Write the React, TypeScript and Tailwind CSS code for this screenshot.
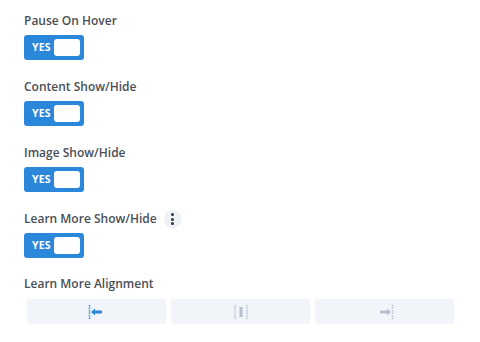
const font = { fontFamily: '"Open Sans", "Liberation Sans", sans-serif' };

function Toggle() {
  return (
    <div className="flex items-center justify-between w-[60px] h-[25px] rounded-[3px] bg-[#2b87da] pl-[8px] pr-[4px]">
      <span className="text-[10.5px] font-bold text-white tracking-[0.2px]">YES</span>
      <span className="w-[26px] h-[17px] rounded-[3px] bg-white" />
    </div>
  );
}

function Label({ children }: { children: React.ReactNode }) {
  return <div className="h-[18px] leading-[18px] text-[12px] font-semibold text-[#4a4f57]">{children}</div>;
}

function AlignLeft({ color }: { color: string }) {
  return (
    <svg width="18" height="16" viewBox="0 0 18 16">
      <line x1="1.5" y1="1" x2="1.5" y2="15" stroke={color} strokeWidth="1.5" strokeDasharray="1.5 1" />
      <path d="M3 8 L7 4.5 V6.5 H14 V9.5 H7 V11.5 Z" fill={color} />
    </svg>
  );
}

function AlignRight({ color }: { color: string }) {
  return (
    <svg width="18" height="16" viewBox="0 0 18 16">
      <line x1="16.5" y1="1" x2="16.5" y2="15" stroke={color} strokeWidth="1.5" strokeDasharray="1.5 1" />
      <path d="M15 8 L11 4.5 V6.5 H4 V9.5 H11 V11.5 Z" fill={color} />
    </svg>
  );
}

function AlignCenter({ color }: { color: string }) {
  return (
    <svg width="16" height="16" viewBox="0 0 16 16">
      <line x1="2" y1="1" x2="2" y2="15" stroke={color} strokeWidth="1.5" strokeDasharray="1.5 1" />
      <line x1="14" y1="1" x2="14" y2="15" stroke={color} strokeWidth="1.5" strokeDasharray="1.5 1" />
      <rect x="6.5" y="3" width="3" height="10" fill={color} />
    </svg>
  );
}

export default function App() {
  const toggles = ["Pause On Hover", "Content Show/Hide", "Image Show/Hide"];
  return (
    <div className="w-[480px] h-[342px] bg-white pl-[24px] pt-[12px] overflow-hidden" style={font}>
      {toggles.map((t) => (
        <div key={t} className="flex flex-col gap-[5px] mb-[18px]">
          <Label>{t}</Label>
          <Toggle />
        </div>
      ))}
      <div className="flex flex-col gap-[5px] mb-[17px]">
        <div className="flex items-center gap-[7px]">
          <Label>Learn More Show/Hide</Label>
          <span className="w-[18px] h-[18px] rounded-full bg-[#eef1f5] flex flex-col items-center justify-center gap-[1.5px]">
            <span className="w-[3px] h-[3px] rounded-full bg-[#32373c]" />
            <span className="w-[3px] h-[3px] rounded-full bg-[#32373c]" />
            <span className="w-[3px] h-[3px] rounded-full bg-[#32373c]" />
          </span>
        </div>
        <Toggle />
      </div>
      <div className="flex flex-col gap-[6px]">
        <Label>Learn More Alignment</Label>
        <div className="grid grid-cols-3 gap-[5px] w-[427px] ml-[3px]">
          <div className="h-[25px] rounded-[3px] bg-[#f1f5f9] flex items-center justify-center">
            <AlignLeft color="#2b87da" />
          </div>
          <div className="h-[25px] rounded-[3px] bg-[#f1f5f9] flex items-center justify-center">
            <AlignCenter color="#b5c0cd" />
          </div>
          <div className="h-[25px] rounded-[3px] bg-[#f1f5f9] flex items-center justify-center">
            <AlignRight color="#b5c0cd" />
          </div>
        </div>
      </div>
    </div>
  );
}
